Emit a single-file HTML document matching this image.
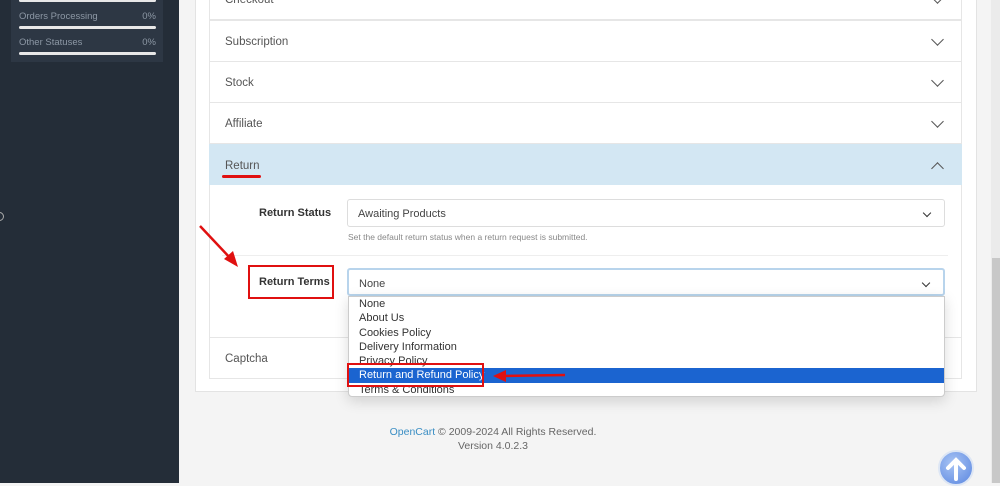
<!DOCTYPE html>
<html><head><meta charset="utf-8"><style>
*{box-sizing:border-box;margin:0;padding:0}
body{width:1000px;height:483px;overflow:hidden;background:#f4f4f4;font-family:"Liberation Sans",sans-serif;font-size:11px;color:#555;position:relative}
.side{position:absolute;left:0;top:0;width:179px;height:483px;background:#242d38}
.stat{position:absolute;left:11px;top:0;width:152px;height:62px;background:#2d3744}
.stat div{position:absolute;left:8px;width:137px;color:#8d98a5;font-size:9.5px}
.stat span{float:right}
.bar{position:absolute;left:8px;width:137px;height:3px;background:#e8e8e8;border-radius:2px}
.card{position:absolute;left:195px;top:-10px;width:782px;height:402px;background:#fff;border:1px solid #e3e3e3}
.row{position:absolute;left:209px;width:753px;height:42px;border:1px solid #e6e6e6;background:#fff;font-size:11.5px;color:#555;padding:15px 0 0 15px}
.chev{position:absolute;right:19px;top:14px;width:9px;height:9px;border-right:1.6px solid #555;border-bottom:1.6px solid #555;transform:rotate(45deg)}
.sel{position:absolute;left:347px;width:598px;height:28px;border:1px solid #ddd;border-radius:3px;background:#fff;padding:8px 0 0 10px;font-size:11px;color:#444}
.sc{position:absolute;right:14px;top:10px;width:6px;height:6px;border-right:1.5px solid #333;border-bottom:1.5px solid #333;transform:rotate(45deg)}
.lbl{position:absolute;font-weight:bold;font-size:11px;color:#333}
.dd{position:absolute;left:348px;top:296px;width:597px;height:101px;background:#fff;border:1px solid #ccc;border-radius:0 0 4px 4px;box-shadow:0 4px 14px rgba(0,0,0,.15);font-size:11px;color:#333}
.dd div{height:14.3px;line-height:14px;padding-left:10px}
.red{position:absolute;border:2.5px solid #e01010}
</style></head><body>
<div class="side">
 <div class="stat">
  <div class="bar" style="top:-1px"></div>
  <div style="top:11px">Orders Processing<span>0%</span></div>
  <div class="bar" style="top:26px"></div>
  <div style="top:37px">Other Statuses<span>0%</span></div>
  <div class="bar" style="top:52px"></div>
 </div>
 <div style="position:absolute;left:-5px;top:212px;width:9px;height:9px;border:1.5px solid #aaa;border-radius:50%"></div>
</div>
<div style="position:absolute;left:991px;top:0;width:9px;height:483px;background:#ebebeb"></div>
<div style="position:absolute;left:992px;top:258px;width:8px;height:225px;background:#c8c8c8"></div>
<div class="card"></div>
<div class="row" style="top:-22px">Checkout<i class="chev"></i></div>
<div class="row" style="top:20px">Subscription<i class="chev"></i></div>
<div class="row" style="top:61px">Stock<i class="chev"></i></div>
<div class="row" style="top:102px">Affiliate<i class="chev"></i></div>
<div class="row" style="top:144px;background:#d3e7f3;border-color:#d3e7f3">Return<i class="chev" style="transform:rotate(-135deg);top:19px"></i></div>
<div style="position:absolute;left:222px;top:175px;width:39px;height:3px;background:#e01010;border-radius:2px"></div>
<div style="position:absolute;left:209px;top:185px;width:753px;height:153px;border:1px solid #e6e6e6;border-top:none;background:#fff"></div>
<div style="position:absolute;left:222px;top:255px;width:726px;border-top:1px solid #eee"></div>
<div class="lbl" style="left:259px;top:207px">Return Status</div>
<div class="sel" style="top:199px">Awaiting Products<i class="sc"></i></div>
<div style="position:absolute;left:348px;top:232px;font-size:8.5px;color:#888">Set the default return status when a return request is submitted.</div>
<div class="lbl" style="left:259px;top:276px">Return Terms</div>
<div class="red" style="left:248px;top:265px;width:86px;height:34px"></div>
<div class="sel" style="top:268px;border:2px solid #b8d4ec">None<i class="sc"></i></div>
<div class="row" style="top:337px">Captcha</div>
<div class="dd">
 <div>None</div><div>About Us</div><div>Cookies Policy</div><div>Delivery Information</div><div>Privacy Policy</div>
 <div style="background:#1b64d0;color:#fff">Return and Refund Policy</div><div>Terms &amp; Conditions</div>
</div>
<div class="red" style="left:347px;top:363px;width:137px;height:24px"></div>
<svg style="position:absolute;left:190px;top:220px" width="60" height="50"><line x1="10" y1="6" x2="42" y2="40" stroke="#e01010" stroke-width="2.5"/><polygon points="48,47 34,39 43,31" fill="#e01010"/></svg>
<svg style="position:absolute;left:490px;top:368px" width="80" height="16"><line x1="12" y1="8" x2="75" y2="7" stroke="#e01010" stroke-width="2.5"/><polygon points="3,8 16,2 16,14" fill="#e01010"/></svg>
<div style="position:absolute;left:0;width:986px;top:425px;text-align:center;font-size:10.5px;color:#666;line-height:14px"><span style="color:#3a8ec4">OpenCart</span> © 2009-2024 All Rights Reserved.<br>Version 4.0.2.3</div>
<div style="position:absolute;left:938px;top:450px;width:36px;height:36px;border-radius:50%;background:radial-gradient(circle at 40% 35%,#a8c4f4,#5a86e0);border:2px solid #dde6f4"></div>
<svg style="position:absolute;left:944px;top:455px" width="24" height="28"><path d="M12 24V6M4 13l8-8 8 8" stroke="#fff" stroke-width="4" fill="none" stroke-linecap="round"/></svg>
</body></html>
